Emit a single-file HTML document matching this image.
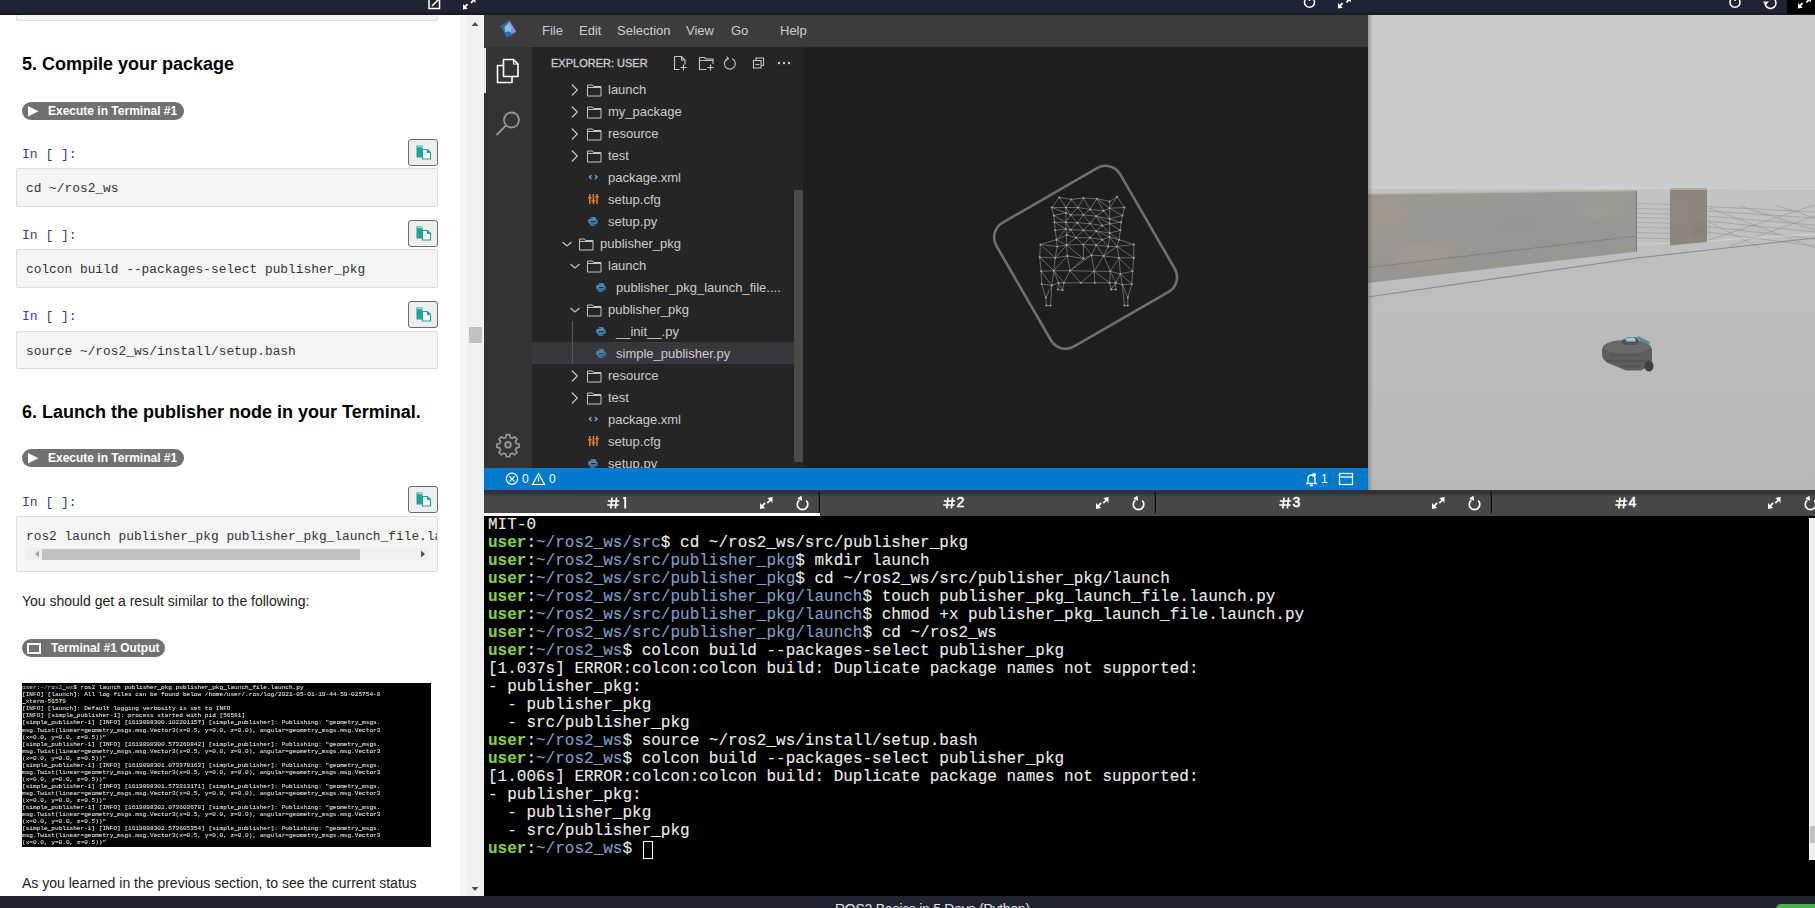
<!DOCTYPE html>
<html><head><meta charset="utf-8">
<style>
*{box-sizing:border-box;margin:0;padding:0}
html,body{width:1815px;height:908px;overflow:hidden;background:#fff;font-family:"Liberation Sans",sans-serif}
.abs{position:absolute}
#topbar{left:0;top:0;width:1815px;height:15px;background:linear-gradient(#1e2433 0,#1e2433 12px,#161b27 13px,#161b27 15px)}
#botbar{left:0;top:896px;width:1815px;height:12px;background:#1f2430}
#left{left:0;top:15px;width:460px;height:881px;background:#fff;overflow:hidden}
#lscroll{left:460px;top:15px;width:24px;height:881px;background:#f1f1f1}
.h{position:absolute;left:22px;margin-top:1px;font-weight:bold;font-size:18px;color:#000;white-space:nowrap}
.pill{position:absolute;left:22px;height:18px;border-radius:9px;background:#717171;color:#fff;font-weight:bold;font-size:12px;white-space:nowrap}
.inp{position:absolute;left:22px;margin-top:1.5px;font-family:"Liberation Mono",monospace;font-size:13px;color:#303f9f;white-space:pre}
.copy{position:absolute;left:408px;width:30px;height:27px;border:1px solid #6a6a6a;border-radius:3px;background:#eeeeee}
.box{position:absolute;left:16px;width:422px;background:#f5f5f5;border:1px solid #dcdcdc;border-radius:2px;overflow:hidden}
.code{position:absolute;left:9px;margin-top:1px;font-family:"Liberation Mono",monospace;font-size:12.85px;color:#333;white-space:pre}
.p{position:absolute;left:22px;margin-top:1px;font-size:14px;color:#222;white-space:nowrap}
#vs{left:484px;top:15px;width:884px;height:475px;background:#1e1e1e;overflow:hidden}
#menubar{left:0;top:0;width:884px;height:32px;background:#3c3c3c}
.menu{position:absolute;top:8px;font-size:13px;color:#cccccc}
#act{left:0;top:32px;width:48px;height:421px;background:#333333}
#side{left:48px;top:32px;width:271px;height:421px;background:#252526;overflow:hidden}
#status{left:0;top:453px;width:884px;height:22px;background:#007acc}
.row{position:absolute;left:0;width:262px;height:22px;font-size:13px;color:#cccccc;white-space:nowrap}
.row span.t{position:absolute;top:4px}
#gz{left:1368px;top:15px;width:447px;height:475px;background:#c9c9c9;overflow:hidden}
#tabs{left:484px;top:490px;width:1331px;height:26px;background:linear-gradient(#36313b 0,#36313b 4px,#3d403b 5px,#474747 6px,#474747 100%);overflow:hidden}
.tab{position:absolute;top:0;width:336px;height:26px}
.tab .n{position:absolute;top:4px;font-size:14px;color:#fff;-webkit-text-stroke:0.5px #fff}
#term{left:484px;top:516px;width:1331px;height:380px;background:#000;overflow:hidden}
#term pre{position:absolute;left:4px;top:-0.5px;font-family:"Liberation Mono",monospace;font-size:16px;line-height:18px;color:#ececec;-webkit-text-stroke:0.1px #ececec}
.g{color:#8ad236;font-weight:bold;-webkit-text-stroke:0.1px #8ad236}.b{color:#7ba0cc;-webkit-text-stroke:0.1px #7ba0cc}
</style></head><body>

<div id="topbar" class="abs">
  <svg class="abs" style="left:0;top:0" width="1815" height="15">
    <rect x="1787" y="0" width="28" height="14" fill="#000"/>
    <g fill="none" stroke="#fff" stroke-width="1.5">
      <path d="M429 -2v10.5h10.5v-10.5"/>
      <path d="M432 6l7-7"/>
      <path d="M1307 -2a5 5 0 1 0 5 0 M1309.5 -3v4"/>
      <path d="M1732.5 -2a5 5 0 1 0 5 0 M1735 -3v4"/>
      <path d="M1765 3a5.5 5.5 0 1 0 5.5-5.5"/>
    </g>
    <g fill="#fff">
      <path d="M463 9.5v-5.5l1.7 1.7 2.2-2.2 1.3 1.3-2.2 2.2 1.7 1.7z"/>
      <path d="M475.5 -2.5v5.5l-1.7-1.7-2.2 2.2-1.3-1.3 2.2-2.2-1.7-1.7z"/>
      <path d="M1338 8.5v-5.5l1.7 1.7 2.2-2.2 1.3 1.3-2.2 2.2 1.7 1.7z"/>
      <path d="M1351 -3v5.5l-1.7-1.7-2.2 2.2-1.3-1.3 2.2-2.2-1.7-1.7z"/>
      <path d="M1798 8.5v-5.5l1.7 1.7 2.2-2.2 1.3 1.3-2.2 2.2 1.7 1.7z"/>
      <path d="M1811 -3v5.5l-1.7-1.7-2.2 2.2-1.3-1.3 2.2-2.2-1.7-1.7z"/>
      <path d="M1763 1.5h6l-3 3.5z"/>
    </g>
  </svg>
</div>

<!-- LEFT NOTEBOOK -->
<div id="left" class="abs">
  <div class="box" style="top:-20px;height:26px"></div>
  <div class="h" style="top:38px">5. Compile your package</div>
  <div class="pill" style="top:87px;width:162px"><svg class="abs" style="left:6px;top:3.5px" width="11" height="11"><path d="M0 0L10.5 5.25L0 10.5z" fill="#fff"/></svg><span class="abs" style="left:26px;top:1.5px">Execute in Terminal #1</span></div>

  <div class="inp" style="top:130px">In [ ]:</div>
  <div class="copy" style="top:124px"><svg class="abs" style="left:7px;top:5px" width="16" height="15"><rect x="0.5" y="0.5" width="6" height="12" fill="#1fa396"/><path d="M6.5 4.5h5l3 3v6.5h-8z M11.5 4.5v3h3" fill="#fff" stroke="#1fa396" stroke-width="1.2"/><rect x="1.5" y="1.3" width="5" height="1" fill="#9fe"/></svg></div>
  <div class="box" style="top:153px;height:39px"><div class="code" style="top:11px">cd ~/ros2_ws</div></div>

  <div class="inp" style="top:211px">In [ ]:</div>
  <div class="copy" style="top:205px"><svg class="abs" style="left:7px;top:5px" width="16" height="15"><rect x="0.5" y="0.5" width="6" height="12" fill="#1fa396"/><path d="M6.5 4.5h5l3 3v6.5h-8z M11.5 4.5v3h3" fill="#fff" stroke="#1fa396" stroke-width="1.2"/><rect x="1.5" y="1.3" width="5" height="1" fill="#9fe"/></svg></div>
  <div class="box" style="top:234px;height:39px"><div class="code" style="top:11px">colcon build --packages-select publisher_pkg</div></div>

  <div class="inp" style="top:292px">In [ ]:</div>
  <div class="copy" style="top:286px"><svg class="abs" style="left:7px;top:5px" width="16" height="15"><rect x="0.5" y="0.5" width="6" height="12" fill="#1fa396"/><path d="M6.5 4.5h5l3 3v6.5h-8z M11.5 4.5v3h3" fill="#fff" stroke="#1fa396" stroke-width="1.2"/><rect x="1.5" y="1.3" width="5" height="1" fill="#9fe"/></svg></div>
  <div class="box" style="top:316px;height:38px"><div class="code" style="top:11px">source ~/ros2_ws/install/setup.bash</div></div>

  <div class="h" style="top:386px">6. Launch the publisher node in your Terminal.</div>
  <div class="pill" style="top:434px;width:162px"><svg class="abs" style="left:6px;top:3.5px" width="11" height="11"><path d="M0 0L10.5 5.25L0 10.5z" fill="#fff"/></svg><span class="abs" style="left:26px;top:1.5px">Execute in Terminal #1</span></div>

  <div class="inp" style="top:478px">In [ ]:</div>
  <div class="copy" style="top:471px"><svg class="abs" style="left:7px;top:5px" width="16" height="15"><rect x="0.5" y="0.5" width="6" height="12" fill="#1fa396"/><path d="M6.5 4.5h5l3 3v6.5h-8z M11.5 4.5v3h3" fill="#fff" stroke="#1fa396" stroke-width="1.2"/><rect x="1.5" y="1.3" width="5" height="1" fill="#9fe"/></svg></div>
  <div class="box" style="top:501px;height:56px"><div class="code" style="top:11px">ros2 launch publisher_pkg publisher_pkg_launch_file.launch.py</div><div class="abs" style="left:9px;top:31px;width:403px;height:12px;background:#f0f0f0"></div><div class="abs" style="left:25px;top:32px;width:318px;height:11px;background:#c1c1c1"></div><svg class="abs" style="left:9px;top:31px" width="403" height="12"><path d="M9 6l4-3.5v7z" fill="#a3a3a3"/><path d="M399 6l-4-3.5v7z" fill="#505050"/></svg></div>

  <div class="p" style="top:577px">You should get a result similar to the following:</div>
  <div class="pill" style="top:624px;width:143px"><svg class="abs" style="left:5px;top:3.5px" width="14" height="11"><rect x="1" y="1" width="12" height="9" fill="none" stroke="#fff" stroke-width="2"/></svg><span class="abs" style="left:29px;top:1.5px">Terminal #1 Output</span></div>
  <div class="abs" style="left:22px;top:668px;width:409px;height:164px;background:#000;overflow:hidden"><pre class="abs" style="left:0;top:0.5px;font-family:'Liberation Mono',monospace;font-size:12.2px;line-height:14.1px;color:#e8e8e8;transform:scale(0.5);transform-origin:0 0;-webkit-text-stroke:0.12px #e8e8e8"><span style="color:#8ae234">user</span>:<span style="color:#729fcf">~/ros2_ws</span>$ ros2 launch publisher_pkg publisher_pkg_launch_file.launch.py
[INFO] [launch]: All log files can be found below /home/user/.ros/log/2021-05-01-19-44-59-025754-8
_xterm-56579
[INFO] [launch]: Default logging verbosity is set to INFO
[INFO] [simple_publisher-1]: process started with pid [56581]
[simple_publisher-1] [INFO] [1619898300.102201157] [simple_publisher]: Publishing: "geometry_msgs.
msg.Twist(linear=geometry_msgs.msg.Vector3(x=0.5, y=0.0, z=0.0), angular=geometry_msgs.msg.Vector3
(x=0.0, y=0.0, z=0.5))"
[simple_publisher-1] [INFO] [1619898300.573269842] [simple_publisher]: Publishing: "geometry_msgs.
msg.Twist(linear=geometry_msgs.msg.Vector3(x=0.5, y=0.0, z=0.0), angular=geometry_msgs.msg.Vector3
(x=0.0, y=0.0, z=0.5))"
[simple_publisher-1] [INFO] [1619898301.073378163] [simple_publisher]: Publishing: "geometry_msgs.
msg.Twist(linear=geometry_msgs.msg.Vector3(x=0.5, y=0.0, z=0.0), angular=geometry_msgs.msg.Vector3
(x=0.0, y=0.0, z=0.5))"
[simple_publisher-1] [INFO] [1619898301.573313171] [simple_publisher]: Publishing: "geometry_msgs.
msg.Twist(linear=geometry_msgs.msg.Vector3(x=0.5, y=0.0, z=0.0), angular=geometry_msgs.msg.Vector3
(x=0.0, y=0.0, z=0.5))"
[simple_publisher-1] [INFO] [1619898302.073603678] [simple_publisher]: Publishing: "geometry_msgs.
msg.Twist(linear=geometry_msgs.msg.Vector3(x=0.5, y=0.0, z=0.0), angular=geometry_msgs.msg.Vector3
(x=0.0, y=0.0, z=0.5))"
[simple_publisher-1] [INFO] [1619898302.573605354] [simple_publisher]: Publishing: "geometry_msgs.
msg.Twist(linear=geometry_msgs.msg.Vector3(x=0.5, y=0.0, z=0.0), angular=geometry_msgs.msg.Vector3
(x=0.0, y=0.0, z=0.5))"</pre></div>
  <div class="p" style="top:859px">As you learned in the previous section, to see the current status</div>
</div>
<div id="lscroll" class="abs"><div class="abs" style="left:0;top:0;width:7px;height:881px;background:#f6f6f6"></div><div class="abs" style="left:9px;top:312px;width:13px;height:16px;background:#c1c1c1"></div>
<svg class="abs" style="left:0;top:0" width="24" height="881"><path d="M15 7l3.5 4h-7z" fill="#505050"/><path d="M15 876l3.5-4h-7z" fill="#505050"/></svg></div>

<!-- VS CODE -->
<div id="vs" class="abs">
  <!--CHAIR--><svg class="abs" style="left:0;top:0" width="884" height="475">
    <rect x="530.1" y="170.8" width="143" height="143" rx="17" fill="none" stroke="#6f6f6f" stroke-width="2.6" transform="rotate(-30 601.6 242.3)"/>
    <path d="M574.5 267.8L579.9 267.8M594.0 192.5L606.1 194.5M625.6 222.1L633.0 231.5M618.2 224.7L625.6 222.1M612.2 216.0L625.6 218.0M586.0 255.7L610.2 256.3M638.4 200.5L640.4 192.5M606.1 222.7L618.2 224.7M599.4 243.6L607.5 240.2M581.9 197.9L581.9 207.3M638.4 269.8L647.8 269.1M612.2 201.2L619.6 195.8M567.8 192.5L575.2 182.4M612.2 201.2L618.2 210.6M557.1 256.3L569.8 255.7M586.0 255.7L596.7 267.8M557.7 269.1L567.8 270.5M599.4 229.5L606.1 222.7M593.4 207.9L599.4 215.3M581.9 214.0L582.6 220.0M582.6 220.0L582.6 230.1M606.1 194.5L619.6 195.8M570.5 207.3L581.9 214.0M633.0 231.5L649.8 242.9M636.4 259.0L647.8 269.1M593.4 207.9L599.4 199.9M638.4 269.8L640.4 290.6M556.4 229.5L573.2 231.5M633.0 231.5L649.8 229.5M581.9 207.3L581.9 214.0M618.2 210.6L625.6 208.6M586.6 199.9L599.4 199.9M582.6 230.1L599.4 243.6M627.0 274.5L631.7 274.5M592.0 222.7L599.4 215.3M625.6 267.8L627.0 274.5M569.8 255.7L583.3 240.9M625.6 218.0L635.0 224.7M567.8 192.5L569.8 200.5M612.2 230.1L619.6 240.9M567.8 270.5L569.8 255.7M643.8 282.6L647.8 269.1M636.4 259.0L638.4 269.8M619.6 240.9L633.0 231.5M635.0 224.7L649.8 229.5M612.2 216.0L625.6 222.1M599.4 199.9L606.1 194.5M569.8 200.5L581.9 197.9M573.9 274.5L574.5 267.8M633.0 231.5L635.0 242.9M572.5 224.7L573.2 231.5M612.2 216.0L618.2 210.6M562.4 290.6L566.5 290.6M599.4 215.3L606.1 222.7M625.6 193.2L638.4 200.5M631.7 267.8L638.4 269.8M612.2 230.1L618.2 224.7M593.4 207.9L606.1 208.6M606.1 194.5L612.2 201.2M607.5 240.2L619.6 240.9M625.6 193.2L633.0 181.7M636.4 215.3L637.0 207.3M571.2 242.9L583.3 240.9M599.4 229.5L612.2 230.1M625.6 186.4L625.6 193.2M631.7 267.8L636.4 259.0M618.2 224.7L624.3 231.5M561.8 282.6L562.4 290.6M586.6 214.7L593.4 207.9M606.1 222.7L612.2 230.1M633.0 181.7L640.4 192.5M612.8 183.7L619.6 195.8M610.8 267.8L625.6 267.8M556.4 229.5L572.5 224.7M555.7 242.2L556.4 229.5M619.6 240.9L635.0 242.9M638.4 269.8L643.8 282.6M625.6 193.2L625.6 203.9M581.9 207.3L586.6 199.9M557.1 256.3L567.8 270.5M555.7 242.2L571.2 242.9M625.6 186.4L633.0 181.7M606.1 208.6L612.2 216.0M635.0 224.7L636.4 215.3M567.8 192.5L581.9 197.9M570.5 207.3L581.9 207.3M571.2 242.9L573.2 231.5M581.9 192.5L586.6 199.9M606.1 222.7L612.2 216.0M582.6 220.0L592.0 222.7M610.2 256.3L619.6 240.9M636.4 259.0L648.5 256.3M606.1 194.5L612.8 183.7M594.0 192.5L599.4 199.9M626.3 256.3L636.4 259.0M569.8 255.7L586.0 255.7M586.6 199.9L593.4 207.9M643.8 282.6L643.8 290.6M625.6 203.9L637.0 207.3M579.9 267.8L586.0 255.7M625.6 203.9L638.4 200.5M574.5 267.8L578.6 275.2M575.2 182.4L587.3 184.4M571.2 215.3L572.5 224.7M624.3 231.5L625.6 222.1M631.7 267.8L631.7 274.5M612.8 183.7L625.6 186.4M596.7 267.8L610.8 267.8M625.6 193.2L640.4 192.5M606.1 208.6L618.2 210.6M592.0 222.7L606.1 222.7M610.2 256.3L626.3 256.3M587.3 184.4L594.0 192.5M618.2 210.6L625.6 218.0M556.4 229.5L571.2 242.9M555.7 242.2L557.1 256.3M596.7 267.8L610.2 256.3M566.5 290.6L567.8 270.5M635.0 242.9L636.4 259.0M610.2 256.3L610.8 267.8M572.5 224.7L582.6 230.1M592.0 222.7L599.4 229.5M599.4 215.3L612.2 216.0M612.2 201.2L625.6 203.9M570.5 207.3L571.2 215.3M607.5 240.2L610.2 256.3M625.6 267.8L626.3 256.3M625.6 208.6L637.0 207.3M583.3 240.9L599.4 243.6M587.3 184.4L599.4 183.1M612.2 201.2L625.6 208.6M572.5 224.7L582.6 220.0M581.9 207.3L586.6 214.7M583.3 240.9L586.0 255.7M586.6 199.9L594.0 192.5M599.4 199.9L606.1 208.6M599.4 183.1L612.8 183.7M581.9 192.5L587.3 184.4M575.2 182.4L581.9 192.5M640.4 290.6L643.8 290.6M612.2 216.0L618.2 224.7M567.8 192.5L581.9 192.5M625.6 218.0L636.4 215.3M619.6 195.8L625.6 193.2M625.6 203.9L625.6 208.6M582.6 230.1L592.0 222.7M581.9 214.0L586.6 214.7M648.5 256.3L649.8 242.9M569.8 255.7L571.2 242.9M607.5 240.2L612.2 230.1M561.8 282.6L567.8 270.5M578.6 275.2L579.9 267.8M637.0 207.3L638.4 200.5M557.1 256.3L557.7 269.1M582.6 220.0L586.6 214.7M599.4 229.5L599.4 243.6M626.3 256.3L631.7 267.8M579.9 267.8L596.7 267.8M569.8 200.5L570.5 207.3M606.1 208.6L612.2 201.2M635.0 242.9L649.8 242.9M599.4 199.9L612.2 201.2M625.6 208.6L636.4 215.3M567.8 270.5L574.5 267.8M612.8 183.7L625.6 193.2M581.9 192.5L594.0 192.5M625.6 222.1L635.0 224.7M571.2 242.9L582.6 230.1M572.5 224.7L581.9 214.0M586.0 255.7L599.4 243.6M569.8 255.7L574.5 267.8M594.0 192.5L599.4 183.1M625.6 218.0L625.6 222.1M635.0 242.9L648.5 256.3M581.9 192.5L581.9 197.9M571.2 215.3L581.9 214.0M569.8 255.7L579.9 267.8M647.8 269.1L648.5 256.3M573.9 274.5L578.6 275.2M599.4 215.3L606.1 208.6M625.6 267.8L631.7 267.8M619.6 240.9L626.3 256.3M586.6 214.7L592.0 222.7M582.6 230.1L583.3 240.9M626.3 256.3L635.0 242.9M633.0 231.5L635.0 224.7M624.3 231.5L633.0 231.5M573.2 231.5L582.6 230.1M581.9 207.3L593.4 207.9M619.6 195.8L625.6 203.9M557.7 269.1L561.8 282.6M649.8 229.5L649.8 242.9M612.2 230.1L624.3 231.5M599.4 183.1L606.1 194.5M555.7 242.2L569.8 255.7M581.9 197.9L586.6 199.9M599.4 229.5L607.5 240.2M627.0 274.5L631.7 267.8M625.6 208.6L625.6 218.0M610.2 256.3L625.6 267.8M569.8 200.5L581.9 207.3M586.6 214.7L599.4 215.3M586.0 255.7L607.5 240.2M619.6 240.9L624.3 231.5M582.6 230.1L599.4 229.5" fill="none" stroke="#7e7e7e" stroke-width="0.75"/>
    <g fill="#a6a6a6"><circle cx="626.3" cy="256.3" r="1"/><circle cx="625.6" cy="203.9" r="1"/><circle cx="582.6" cy="220.0" r="1"/><circle cx="596.7" cy="267.8" r="1"/><circle cx="643.8" cy="290.6" r="1"/><circle cx="635.0" cy="242.9" r="1"/><circle cx="593.4" cy="207.9" r="1"/><circle cx="625.6" cy="193.2" r="1"/><circle cx="633.0" cy="181.7" r="1"/><circle cx="599.4" cy="229.5" r="1"/><circle cx="567.8" cy="192.5" r="1"/><circle cx="612.8" cy="183.7" r="1"/><circle cx="582.6" cy="230.1" r="1"/><circle cx="610.2" cy="256.3" r="1"/><circle cx="635.0" cy="224.7" r="1"/><circle cx="581.9" cy="197.9" r="1"/><circle cx="625.6" cy="218.0" r="1"/><circle cx="618.2" cy="210.6" r="1"/><circle cx="572.5" cy="224.7" r="1"/><circle cx="606.1" cy="194.5" r="1"/><circle cx="592.0" cy="222.7" r="1"/><circle cx="579.9" cy="267.8" r="1"/><circle cx="573.9" cy="274.5" r="1"/><circle cx="648.5" cy="256.3" r="1"/><circle cx="633.0" cy="231.5" r="1"/><circle cx="647.8" cy="269.1" r="1"/><circle cx="570.5" cy="207.3" r="1"/><circle cx="619.6" cy="195.8" r="1"/><circle cx="638.4" cy="269.8" r="1"/><circle cx="618.2" cy="224.7" r="1"/><circle cx="567.8" cy="270.5" r="1"/><circle cx="610.8" cy="267.8" r="1"/><circle cx="636.4" cy="259.0" r="1"/><circle cx="569.8" cy="255.7" r="1"/><circle cx="625.6" cy="267.8" r="1"/><circle cx="606.1" cy="208.6" r="1"/><circle cx="599.4" cy="199.9" r="1"/><circle cx="557.7" cy="269.1" r="1"/><circle cx="581.9" cy="207.3" r="1"/><circle cx="640.4" cy="290.6" r="1"/><circle cx="607.5" cy="240.2" r="1"/><circle cx="643.8" cy="282.6" r="1"/><circle cx="636.4" cy="215.3" r="1"/><circle cx="631.7" cy="267.8" r="1"/><circle cx="583.3" cy="240.9" r="1"/><circle cx="606.1" cy="222.7" r="1"/><circle cx="574.5" cy="267.8" r="1"/><circle cx="561.8" cy="282.6" r="1"/><circle cx="587.3" cy="184.4" r="1"/><circle cx="581.9" cy="214.0" r="1"/><circle cx="571.2" cy="215.3" r="1"/><circle cx="619.6" cy="240.9" r="1"/><circle cx="624.3" cy="231.5" r="1"/><circle cx="578.6" cy="275.2" r="1"/><circle cx="631.7" cy="274.5" r="1"/><circle cx="612.2" cy="230.1" r="1"/><circle cx="586.6" cy="214.7" r="1"/><circle cx="586.6" cy="199.9" r="1"/><circle cx="581.9" cy="192.5" r="1"/><circle cx="594.0" cy="192.5" r="1"/><circle cx="569.8" cy="200.5" r="1"/><circle cx="556.4" cy="229.5" r="1"/><circle cx="586.0" cy="255.7" r="1"/><circle cx="555.7" cy="242.2" r="1"/><circle cx="640.4" cy="192.5" r="1"/><circle cx="575.2" cy="182.4" r="1"/><circle cx="557.1" cy="256.3" r="1"/><circle cx="571.2" cy="242.9" r="1"/><circle cx="649.8" cy="229.5" r="1"/><circle cx="612.2" cy="216.0" r="1"/><circle cx="638.4" cy="200.5" r="1"/><circle cx="612.2" cy="201.2" r="1"/><circle cx="573.2" cy="231.5" r="1"/><circle cx="637.0" cy="207.3" r="1"/><circle cx="562.4" cy="290.6" r="1"/><circle cx="649.8" cy="242.9" r="1"/><circle cx="599.4" cy="183.1" r="1"/><circle cx="627.0" cy="274.5" r="1"/><circle cx="625.6" cy="208.6" r="1"/><circle cx="566.5" cy="290.6" r="1"/><circle cx="625.6" cy="186.4" r="1"/><circle cx="599.4" cy="215.3" r="1"/><circle cx="625.6" cy="222.1" r="1"/><circle cx="599.4" cy="243.6" r="1"/></g>
  </svg><!--/CHAIR-->
  <div id="menubar" class="abs">
    <svg class="abs" style="left:14px;top:4px" width="22" height="22" viewBox="0 0 22 22">
      <defs><filter id="lgb"><feGaussianBlur stdDeviation="0.6"/></filter></defs>
      <g filter="url(#lgb)">
      <path d="M11.4 1.3L18.2 12.7L9.3 18L2.2 7.2z" fill="#2f6e9f"/>
      <path d="M11.4 1.3L18.2 12.7L9.3 18z" fill="#9a84d4"/>
      <path d="M11 3.5L13.5 8 12.8 15 7.5 16 6.5 8z" fill="#86bde9"/>
      <ellipse cx="10" cy="15" rx="3.3" ry="2.6" fill="#1f6fb5"/>
      </g>
    </svg>
    <div class="menu" style="left:58px">File</div>
    <div class="menu" style="left:95px">Edit</div>
    <div class="menu" style="left:133px">Selection</div>
    <div class="menu" style="left:202px">View</div>
    <div class="menu" style="left:247px">Go</div>
    <div class="menu" style="left:296px">Help</div>
  </div>
  <div id="act" class="abs">
    <div class="abs" style="left:0;top:1px;width:2px;height:45px;background:#e8e8e8"></div>
    <svg class="abs" style="left:0;top:0" width="48" height="421">
      <g fill="none" stroke="#ffffff" stroke-width="1.6" stroke-linejoin="round">
        <path d="M19 18.5h-5.5v17h14.5v-6"/>
        <path d="M19.5 12.5h10l4.5 4.5v12.5h-14.5z"/>
        <path d="M29.5 12.5v4.5h4.5" stroke-width="1.1"/>
      </g>
      <g fill="none" stroke="#959595" stroke-width="1.8">
        <circle cx="27.5" cy="73" r="7.5"/>
        <path d="M22 78.5l-9.5 9.5"/>
      </g>
      <g transform="translate(24,397.8) scale(0.92)" fill="none" stroke="#9a9a9a" stroke-width="1.75">
        <path d="M-1.8 -11h3.6l0.6 3 2.2 0.9 2.6-1.7 2.6 2.6-1.7 2.6 0.9 2.2 3 0.6v3.6l-3 0.6-0.9 2.2 1.7 2.6-2.6 2.6-2.6-1.7-2.2 0.9-0.6 3h-3.6l-0.6-3-2.2-0.9-2.6 1.7-2.6-2.6 1.7-2.6-0.9-2.2-3-0.6v-3.6l3-0.6 0.9-2.2-1.7-2.6 2.6-2.6 2.6 1.7 2.2-0.9z"/>
        <circle cx="0" cy="0" r="3" stroke-width="2"/>
      </g>
    </svg>
  </div>
  <div id="side" class="abs">
    <div class="abs" style="left:19px;top:10px;font-size:11px;color:#cccccc;white-space:nowrap;-webkit-text-stroke:0.35px #cccccc">EXPLORER: USER</div>
    <svg class="abs" style="left:0;top:0" width="271" height="421" viewBox="0 0 271 421">
      <g fill="none" stroke="#c5c5c5" stroke-width="1.1">
        <!-- new file -->
        <path d="M142.5 9.5h7l3.5 3.5v4.5 M142.5 9.5v13h5 M149.5 9.5v3.5h3.5 M151.5 17.5v6 M148.5 20.5h6"/>
        <!-- new folder -->
        <path d="M167.5 10.5h5l1.5 1.5h7v5 M167.5 10.5v12h7 M167.5 13.5h14 M178.5 17.5v6 M175.5 20.5h6"/>
        <!-- refresh -->
        <path d="M196 11.5a5.5 5.5 0 1 0 4.2 0.2" />
        <path d="M194.5 9.5l2 2.2-2.4 1.6" />
        <!-- collapse -->
        <path d="M221.5 13.5h7.5v7.5h-7.5z M224 13.5v-2.5h7.5v7.5h-2.5 M223.5 17.5h4" />
      </g>
      <g fill="#c5c5c5"><circle cx="247" cy="16" r="1.2"/><circle cx="252" cy="16" r="1.2"/><circle cx="257" cy="16" r="1.2"/></g>
      <rect x="262" y="143" width="10" height="272" fill="#4a4a4a"/>
    </svg>
    <div id="tree" class="abs" style="left:0;top:0;width:271px;height:421px"><svg class="abs" style="left:0;top:0" width="271" height="421"><path d="M39.8 37.5l5.5 5.5-5.5 5.5" fill="none" stroke="#c5c5c5" stroke-width="1.2"/><path d="M55.5 38.0h5l1 1.5h7.5v9.5h-13.5z M55.5 40.5h13.5" fill="none" stroke="#c5c5c5" stroke-width="1"/><path d="M39.8 59.5l5.5 5.5-5.5 5.5" fill="none" stroke="#c5c5c5" stroke-width="1.2"/><path d="M55.5 60.0h5l1 1.5h7.5v9.5h-13.5z M55.5 62.5h13.5" fill="none" stroke="#c5c5c5" stroke-width="1"/><path d="M39.8 81.5l5.5 5.5-5.5 5.5" fill="none" stroke="#c5c5c5" stroke-width="1.2"/><path d="M55.5 82.0h5l1 1.5h7.5v9.5h-13.5z M55.5 84.5h13.5" fill="none" stroke="#c5c5c5" stroke-width="1"/><path d="M39.8 103.5l5.5 5.5-5.5 5.5" fill="none" stroke="#c5c5c5" stroke-width="1.2"/><path d="M55.5 104.0h5l1 1.5h7.5v9.5h-13.5z M55.5 106.5h13.5" fill="none" stroke="#c5c5c5" stroke-width="1"/><path d="M59.5 128l-2 2 2 2 M63 128l2 2-2 2" fill="none" stroke="#6f9bbb" stroke-width="1.6"/><g fill="#e37933"><rect x="57.0" y="147" width="1.6" height="10"/><rect x="60.6" y="147" width="1.6" height="10"/><rect x="64.2" y="147" width="1.6" height="10"/><rect x="56" y="150" width="3.6" height="1.6"/><rect x="59.6" y="153" width="3.6" height="1.6"/><rect x="63.2" y="149" width="3.6" height="1.6"/></g><g transform="translate(61,174.5) scale(0.8)"><path d="M-0.5 -5.5h2.5a2 2 0 0 1 2 2v3h-5.5a1.5 1.5 0 0 0-1.5 1.5v1.5h-1.5a1.5 1.5 0 0 1-1.5-1.5v-2.5a2 2 0 0 1 2-2h3.5v-0.5h-2.5v-0.5a1 1 0 0 1 1-1z" fill="#4d88b8"/><path d="M0.5 5.5h-2.5a2 2 0 0 1-2-2v-3h5.5a1.5 1.5 0 0 0 1.5-1.5v-1.5h1.5a1.5 1.5 0 0 1 1.5 1.5v2.5a2 2 0 0 1-2 2h-3.5v0.5h2.5v0.5a1 1 0 0 1-1 1z" fill="#3d74a0"/></g><path d="M30.5 195l4.5 4 4.5-4" fill="none" stroke="#c5c5c5" stroke-width="1.2"/><path d="M47.5 192.0h5l1 1.5h7.5v9.5h-13.5z M47.5 194.5h13.5" fill="none" stroke="#c5c5c5" stroke-width="1"/><path d="M38.5 217l4.5 4 4.5-4" fill="none" stroke="#c5c5c5" stroke-width="1.2"/><path d="M55.5 214.0h5l1 1.5h7.5v9.5h-13.5z M55.5 216.5h13.5" fill="none" stroke="#c5c5c5" stroke-width="1"/><g transform="translate(69,240.5) scale(0.8)"><path d="M-0.5 -5.5h2.5a2 2 0 0 1 2 2v3h-5.5a1.5 1.5 0 0 0-1.5 1.5v1.5h-1.5a1.5 1.5 0 0 1-1.5-1.5v-2.5a2 2 0 0 1 2-2h3.5v-0.5h-2.5v-0.5a1 1 0 0 1 1-1z" fill="#4d88b8"/><path d="M0.5 5.5h-2.5a2 2 0 0 1-2-2v-3h5.5a1.5 1.5 0 0 0 1.5-1.5v-1.5h1.5a1.5 1.5 0 0 1 1.5 1.5v2.5a2 2 0 0 1-2 2h-3.5v0.5h2.5v0.5a1 1 0 0 1-1 1z" fill="#3d74a0"/></g><path d="M38.5 261l4.5 4 4.5-4" fill="none" stroke="#c5c5c5" stroke-width="1.2"/><path d="M55.5 258.0h5l1 1.5h7.5v9.5h-13.5z M55.5 260.5h13.5" fill="none" stroke="#c5c5c5" stroke-width="1"/><g transform="translate(69,284.5) scale(0.8)"><path d="M-0.5 -5.5h2.5a2 2 0 0 1 2 2v3h-5.5a1.5 1.5 0 0 0-1.5 1.5v1.5h-1.5a1.5 1.5 0 0 1-1.5-1.5v-2.5a2 2 0 0 1 2-2h3.5v-0.5h-2.5v-0.5a1 1 0 0 1 1-1z" fill="#4d88b8"/><path d="M0.5 5.5h-2.5a2 2 0 0 1-2-2v-3h5.5a1.5 1.5 0 0 0 1.5-1.5v-1.5h1.5a1.5 1.5 0 0 1 1.5 1.5v2.5a2 2 0 0 1-2 2h-3.5v0.5h2.5v0.5a1 1 0 0 1-1 1z" fill="#3d74a0"/></g><rect x="0" y="295" width="262" height="22" fill="#37373d"/><g transform="translate(69,306.5) scale(0.8)"><path d="M-0.5 -5.5h2.5a2 2 0 0 1 2 2v3h-5.5a1.5 1.5 0 0 0-1.5 1.5v1.5h-1.5a1.5 1.5 0 0 1-1.5-1.5v-2.5a2 2 0 0 1 2-2h3.5v-0.5h-2.5v-0.5a1 1 0 0 1 1-1z" fill="#4d88b8"/><path d="M0.5 5.5h-2.5a2 2 0 0 1-2-2v-3h5.5a1.5 1.5 0 0 0 1.5-1.5v-1.5h1.5a1.5 1.5 0 0 1 1.5 1.5v2.5a2 2 0 0 1-2 2h-3.5v0.5h2.5v0.5a1 1 0 0 1-1 1z" fill="#3d74a0"/></g><path d="M39.8 323.5l5.5 5.5-5.5 5.5" fill="none" stroke="#c5c5c5" stroke-width="1.2"/><path d="M55.5 324.0h5l1 1.5h7.5v9.5h-13.5z M55.5 326.5h13.5" fill="none" stroke="#c5c5c5" stroke-width="1"/><path d="M39.8 345.5l5.5 5.5-5.5 5.5" fill="none" stroke="#c5c5c5" stroke-width="1.2"/><path d="M55.5 346.0h5l1 1.5h7.5v9.5h-13.5z M55.5 348.5h13.5" fill="none" stroke="#c5c5c5" stroke-width="1"/><path d="M59.5 370l-2 2 2 2 M63 370l2 2-2 2" fill="none" stroke="#6f9bbb" stroke-width="1.6"/><g fill="#e37933"><rect x="57.0" y="389" width="1.6" height="10"/><rect x="60.6" y="389" width="1.6" height="10"/><rect x="64.2" y="389" width="1.6" height="10"/><rect x="56" y="392" width="3.6" height="1.6"/><rect x="59.6" y="395" width="3.6" height="1.6"/><rect x="63.2" y="391" width="3.6" height="1.6"/></g><g transform="translate(61,416.5) scale(0.8)"><path d="M-0.5 -5.5h2.5a2 2 0 0 1 2 2v3h-5.5a1.5 1.5 0 0 0-1.5 1.5v1.5h-1.5a1.5 1.5 0 0 1-1.5-1.5v-2.5a2 2 0 0 1 2-2h3.5v-0.5h-2.5v-0.5a1 1 0 0 1 1-1z" fill="#4d88b8"/><path d="M0.5 5.5h-2.5a2 2 0 0 1-2-2v-3h5.5a1.5 1.5 0 0 0 1.5-1.5v-1.5h1.5a1.5 1.5 0 0 1 1.5 1.5v2.5a2 2 0 0 1-2 2h-3.5v0.5h2.5v0.5a1 1 0 0 1-1 1z" fill="#3d74a0"/></g><rect x="40" y="274" width="1" height="43" fill="#585858"/></svg><div class="row" style="top:31px"><span class="t" style="left:76px">launch</span></div><div class="row" style="top:53px"><span class="t" style="left:76px">my_package</span></div><div class="row" style="top:75px"><span class="t" style="left:76px">resource</span></div><div class="row" style="top:97px"><span class="t" style="left:76px">test</span></div><div class="row" style="top:119px"><span class="t" style="left:76px">package.xml</span></div><div class="row" style="top:141px"><span class="t" style="left:76px">setup.cfg</span></div><div class="row" style="top:163px"><span class="t" style="left:76px">setup.py</span></div><div class="row" style="top:185px"><span class="t" style="left:68px">publisher_pkg</span></div><div class="row" style="top:207px"><span class="t" style="left:76px">launch</span></div><div class="row" style="top:229px"><span class="t" style="left:84px">publisher_pkg_launch_file....</span></div><div class="row" style="top:251px"><span class="t" style="left:76px">publisher_pkg</span></div><div class="row" style="top:273px"><span class="t" style="left:84px">__init__.py</span></div><div class="row" style="top:295px"><span class="t" style="left:84px">simple_publisher.py</span></div><div class="row" style="top:317px"><span class="t" style="left:76px">resource</span></div><div class="row" style="top:339px"><span class="t" style="left:76px">test</span></div><div class="row" style="top:361px"><span class="t" style="left:76px">package.xml</span></div><div class="row" style="top:383px"><span class="t" style="left:76px">setup.cfg</span></div><div class="row" style="top:405px"><span class="t" style="left:76px">setup.py</span></div></div>
  </div>
  <div id="status" class="abs">
    <svg class="abs" style="left:0;top:0" width="884" height="22">
      <g fill="none" stroke="#fff" stroke-width="1.2">
        <circle cx="28" cy="10.8" r="5.6"/>
        <path d="M25.5 8.3l5 5 M30.5 8.3l-5 5"/>
        <path d="M54.5 5.5l6 11h-12z M54.5 9.5v4"/>
      </g>
      <g fill="none" stroke="#fff" stroke-width="1.3">
        <path d="M822 15.5h11 M824 15.5v-5a3.5 3.5 0 0 1 7 0v5 M826 17.5h3"/>
        <rect x="855.5" y="5.5" width="13" height="11"/>
        <path d="M855.5 9h13"/>
      </g>
      <circle cx="830" cy="7" r="2" fill="#fff"/>
    </svg>
    <div class="abs" style="left:38px;top:4px;font-size:12px;color:#fff">0</div>
    <div class="abs" style="left:65px;top:4px;font-size:12px;color:#fff">0</div>
    <div class="abs" style="left:837px;top:4px;font-size:12px;color:#fff">1</div>
  </div>
</div>

<!-- GAZEBO -->
<div id="gz" class="abs">
  <svg class="abs" style="left:0;top:0" width="447" height="475">
    <defs>
      <linearGradient id="gnd" x1="0" y1="0" x2="0" y2="1">
        <stop offset="0" stop-color="#c3c3c3"/><stop offset="0.35" stop-color="#bdbdbd"/><stop offset="1" stop-color="#b8b8b8"/>
      </linearGradient>
      <linearGradient id="w1" x1="0" y1="0" x2="0" y2="1">
        <stop offset="0" stop-color="#9d9893"/><stop offset="1" stop-color="#989490"/>
      </linearGradient>
      <linearGradient id="shad" x1="0" y1="0" x2="1" y2="0">
        <stop offset="0" stop-color="#444" stop-opacity="0.35"/><stop offset="1" stop-color="#444" stop-opacity="0"/>
      </linearGradient>
      <filter id="blur1"><feGaussianBlur stdDeviation="3"/></filter>
    </defs>
    <rect x="0" y="0" width="447" height="175" fill="#cbcbcb"/>
    <rect x="0" y="172" width="447" height="303" fill="url(#gnd)"/>
    <path d="M0 172.5 L447 173.5" stroke="#d0d0d0" stroke-width="2"/>
    <g stroke="#8e8e8e" stroke-width="0.8" fill="none" opacity="0.65"><path d="M269 188.6 L302 189.4 M269 193.5 L302 194.3 M269 198.3 L302 199.1 M269 202.6 L302 203.4 M269 207.4 L302 208.2 M269 212.3 L302 213.1 M269 217.6 L302 218.4 M269 223.0 L302 223.8 M339 191.5 L447 197.0 M339 196.0 L447 203.0 M339 201.0 L447 210.0 M339 206.0 L447 217.0 M339 211.5 L447 224.0 M339 217.0 L447 231.0 M341 193 L447 233 M372 191 L447 215 M407 190 L447 203 M341 207 L392 233 M341 225 L447 190 M362 231 L447 201"/></g>
    <path d="M0 282 L269 243 L447 223" stroke="#8c8c8c" stroke-width="1.1" fill="none"/>
    <path d="M269 229 L302 228.5 M339 226 L447 219" stroke="#dadada" stroke-width="1.2" fill="none" opacity="0.7"/>
    <polygon points="0,178 269,174.5 269,176 0,179.5" fill="#bdb4aa"/>
    <polygon points="0,179.5 269,176 269,236.5 0,268" fill="url(#w1)"/><path d="M268.5 176 V236.5" stroke="#7d7873" stroke-width="1"/>
    <g filter="url(#blur1)" opacity="0.28">
      <ellipse cx="20" cy="200" rx="18" ry="10" fill="#b09c88"/>
      <ellipse cx="55" cy="240" rx="30" ry="10" fill="#b5a38f"/>
      <ellipse cx="150" cy="210" rx="25" ry="8" fill="#96908a"/>
      <ellipse cx="230" cy="195" rx="20" ry="8" fill="#aaa39c"/>
    </g>
    <path d="M0 252.5 L269 221" stroke="#85807a" stroke-width="1.1"/>
    <polygon points="302,174 339,174 339,227 302,230.5" fill="#8d867f"/>
    <g filter="url(#blur1)" opacity="0.35"><ellipse cx="330" cy="215" rx="8" ry="6" fill="#7a726b"/><ellipse cx="312" cy="195" rx="8" ry="10" fill="#978f88"/></g>
    <polygon points="302,173 339,173 339,175 302,175" fill="#b5a99c"/>
    <rect x="0" y="0" width="5" height="475" fill="url(#shad)"/>
    <!-- robot -->
    <g transform="translate(233,323)">
      <path d="M1 11 l2-4 q6-4 14-4.5 h18 q9 0.5 14 5 l2 4 v11 l-4 6 -7 4 h-15 l-7-3 -10-4 q-6-3-7-8z" fill="#5e5e5e"/>
      <path d="M2 10 q4-6 15-6.5 h19 q9 0.5 14 5.5 q-4 5-15 6 h-18 q-11-1-15-5z" fill="#6a6a6a"/>
      <path d="M9 17 h32 M5 23 h40 M20 28h20" stroke="#4c4c4c" stroke-width="0.9"/>
      <path d="M21 2 l7-3 h7 l3 4 -2 4 h-11 l-4-2z" fill="#48555c"/>
      <path d="M24 1 l5-1.5 h4 l2 2 -1 2 h-8z" fill="#a9c6d6"/>
      <path d="M37 -2 l12 6 -1 3 -12-6z" fill="#5a8b96"/>
      <ellipse cx="48" cy="28" rx="4.5" ry="5.5" fill="#3f3f3f"/>
    </g>
  </svg>
</div>

<!-- TERMINAL TABS -->
<div id="tabs" class="abs">
<div class="tab" style="left:0px"><svg class="abs" style="left:122.5px;top:7px" width="13" height="12"><g stroke="#fff" stroke-width="1.7" fill="none"><path d="M5 0.5L3.8 11.5 M9.6 0.5L8.4 11.5 M0.8 4h11.4 M0.2 8h11.4"/></g></svg><svg class="abs" style="left:136.5px;top:7px" width="6" height="12"><path d="M2.2 1.5l2-1v11" fill="none" stroke="#fff" stroke-width="1.9"/></svg><svg class="abs" style="left:0;top:0" width="336" height="26">
      <g fill="#fff">
        <path d="M276 19v-6l1.9 1.9 2.6-2.6 1.3 1.3-2.6 2.6 1.9 1.9z"/>
        <path d="M288.5 7v6l-1.9-1.9-2.6 2.6-1.3-1.3 2.6-2.6-1.9-1.9z"/>
      </g>
      <path d="M322.2 10.5a5.3 5.3 0 1 1-6.8-0.4" fill="none" stroke="#fff" stroke-width="1.7"/>
      <path d="M313 8.5l4.5-2.8 0.6 5z" fill="#fff"/>
      <path d="M334.5 2.5q1 0 1 1v18q0 1-1 1" fill="none" stroke="#111" stroke-width="1.5"/>
    </svg><div class="abs" style="left:0;top:23px;width:336px;height:3px;background:#fff"></div></div><div class="tab" style="left:336px"><svg class="abs" style="left:122.5px;top:7px" width="13" height="12"><g stroke="#fff" stroke-width="1.7" fill="none"><path d="M5 0.5L3.8 11.5 M9.6 0.5L8.4 11.5 M0.8 4h11.4 M0.2 8h11.4"/></g></svg><span class="n" style="left:136.5px">2</span><svg class="abs" style="left:0;top:0" width="336" height="26">
      <g fill="#fff">
        <path d="M276 19v-6l1.9 1.9 2.6-2.6 1.3 1.3-2.6 2.6 1.9 1.9z"/>
        <path d="M288.5 7v6l-1.9-1.9-2.6 2.6-1.3-1.3 2.6-2.6-1.9-1.9z"/>
      </g>
      <path d="M322.2 10.5a5.3 5.3 0 1 1-6.8-0.4" fill="none" stroke="#fff" stroke-width="1.7"/>
      <path d="M313 8.5l4.5-2.8 0.6 5z" fill="#fff"/>
      <path d="M334.5 2.5q1 0 1 1v18q0 1-1 1" fill="none" stroke="#111" stroke-width="1.5"/>
    </svg></div><div class="tab" style="left:672px"><svg class="abs" style="left:122.5px;top:7px" width="13" height="12"><g stroke="#fff" stroke-width="1.7" fill="none"><path d="M5 0.5L3.8 11.5 M9.6 0.5L8.4 11.5 M0.8 4h11.4 M0.2 8h11.4"/></g></svg><span class="n" style="left:136.5px">3</span><svg class="abs" style="left:0;top:0" width="336" height="26">
      <g fill="#fff">
        <path d="M276 19v-6l1.9 1.9 2.6-2.6 1.3 1.3-2.6 2.6 1.9 1.9z"/>
        <path d="M288.5 7v6l-1.9-1.9-2.6 2.6-1.3-1.3 2.6-2.6-1.9-1.9z"/>
      </g>
      <path d="M322.2 10.5a5.3 5.3 0 1 1-6.8-0.4" fill="none" stroke="#fff" stroke-width="1.7"/>
      <path d="M313 8.5l4.5-2.8 0.6 5z" fill="#fff"/>
      <path d="M334.5 2.5q1 0 1 1v18q0 1-1 1" fill="none" stroke="#111" stroke-width="1.5"/>
    </svg></div><div class="tab" style="left:1008px"><svg class="abs" style="left:122.5px;top:7px" width="13" height="12"><g stroke="#fff" stroke-width="1.7" fill="none"><path d="M5 0.5L3.8 11.5 M9.6 0.5L8.4 11.5 M0.8 4h11.4 M0.2 8h11.4"/></g></svg><span class="n" style="left:136.5px">4</span><svg class="abs" style="left:0;top:0" width="336" height="26">
      <g fill="#fff">
        <path d="M276 19v-6l1.9 1.9 2.6-2.6 1.3 1.3-2.6 2.6 1.9 1.9z"/>
        <path d="M288.5 7v6l-1.9-1.9-2.6 2.6-1.3-1.3 2.6-2.6-1.9-1.9z"/>
      </g>
      <path d="M322.2 10.5a5.3 5.3 0 1 1-6.8-0.4" fill="none" stroke="#fff" stroke-width="1.7"/>
      <path d="M313 8.5l4.5-2.8 0.6 5z" fill="#fff"/>
      <path d="M334.5 2.5q1 0 1 1v18q0 1-1 1" fill="none" stroke="#111" stroke-width="1.5"/>
    </svg></div>
</div>

<div id="term" class="abs">
<pre>MIT-0
<span class="g">user</span>:<span class="b">~/ros2_ws/src</span>$ cd ~/ros2_ws/src/publisher_pkg
<span class="g">user</span>:<span class="b">~/ros2_ws/src/publisher_pkg</span>$ mkdir launch
<span class="g">user</span>:<span class="b">~/ros2_ws/src/publisher_pkg</span>$ cd ~/ros2_ws/src/publisher_pkg/launch
<span class="g">user</span>:<span class="b">~/ros2_ws/src/publisher_pkg/launch</span>$ touch publisher_pkg_launch_file.launch.py
<span class="g">user</span>:<span class="b">~/ros2_ws/src/publisher_pkg/launch</span>$ chmod +x publisher_pkg_launch_file.launch.py
<span class="g">user</span>:<span class="b">~/ros2_ws/src/publisher_pkg/launch</span>$ cd ~/ros2_ws
<span class="g">user</span>:<span class="b">~/ros2_ws</span>$ colcon build --packages-select publisher_pkg
[1.037s] ERROR:colcon:colcon build: Duplicate package names not supported:
- publisher_pkg:
  - publisher_pkg
  - src/publisher_pkg
<span class="g">user</span>:<span class="b">~/ros2_ws</span>$ source ~/ros2_ws/install/setup.bash
<span class="g">user</span>:<span class="b">~/ros2_ws</span>$ colcon build --packages-select publisher_pkg
[1.006s] ERROR:colcon:colcon build: Duplicate package names not supported:
- publisher_pkg:
  - publisher_pkg
  - src/publisher_pkg
<span class="g">user</span>:<span class="b">~/ros2_ws</span>$ </pre>
<div class="abs" style="left:158.5px;top:324.5px;width:10px;height:18px;border:1.5px solid #fff"></div>
<div class="abs" style="left:1325px;top:2px;width:6px;height:342px;background:#f0f0f0"></div><div class="abs" style="left:1326px;top:310px;width:5px;height:17px;background:#c1c1c1"></div>
</div>

<div id="botbar" class="abs">
  <div class="abs" style="left:835px;top:5px;font-size:14px;color:#e6e6e6;white-space:nowrap;letter-spacing:-0.25px">ROS2 Basics in 5 Days (Python)</div>
  <div class="abs" style="left:1776px;top:7.5px;width:50px;height:12px;border-radius:5px;background:#4caf50"></div>
</div>
</body></html>
